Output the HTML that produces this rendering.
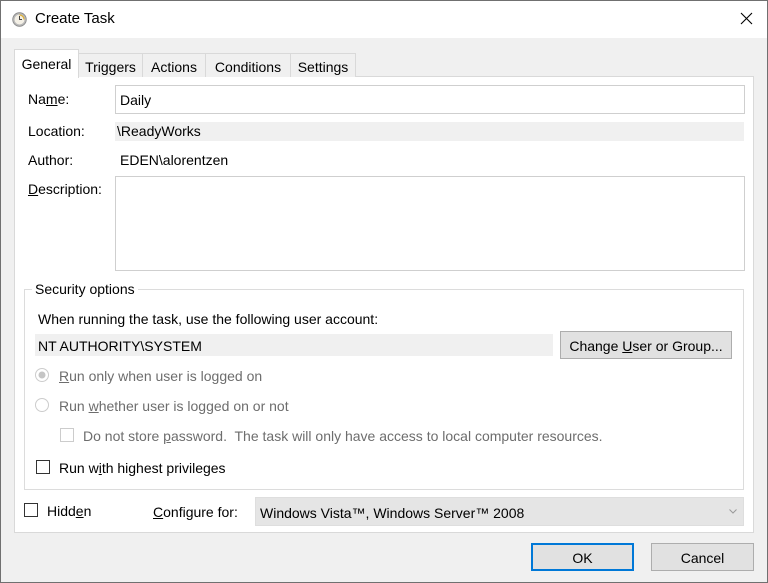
<!DOCTYPE html>
<html><head><style>
*{margin:0;padding:0;box-sizing:border-box}
body{width:768px;height:583px;background:#f0f0f0;font-family:"Liberation Sans",sans-serif;font-size:14px;color:#000;position:relative;overflow:hidden}
.a{position:absolute;white-space:nowrap}
.t{line-height:18px}
.g{color:#6d6d6d}
u{text-decoration:underline}
</style></head><body>
<div class="a" style="left:0;top:0;width:768px;height:583px;border:1px solid #707070"></div>
<div class="a" style="left:1px;top:1px;width:766px;height:37px;background:#fff"></div>
<svg class="a" style="left:12px;top:12px" width="15" height="15" viewBox="0 0 15 15"><circle cx="7.5" cy="7.5" r="6.8" fill="#b8b8b8" stroke="#888" stroke-width="0.8"/><circle cx="7.5" cy="7.5" r="5" fill="#f4f0e6"/><path d="M7.5 4v3.5h2.5" stroke="#444" stroke-width="1" fill="none"/><path d="M7.5 3A4.5 4.5 0 0 1 12 7.5" stroke="#e0b030" stroke-width="1.2" fill="none"/></svg>
<div class="a t" style="left:35px;top:10px;font-size:15px">Create Task</div>
<svg class="a" style="left:740px;top:12px" width="13" height="13"><path d="M1 1L12 12M12 1L1 12" stroke="#000" stroke-width="1.1"/></svg>

<div class="a" style="left:14px;top:76px;width:740px;height:457px;background:#fff;border:1px solid #d9d9d9"></div>
<div class="a t" style="left:78px;top:53px;width:65px;height:24px;border:1px solid #d9d9d9;border-bottom:none;background:#f0f0f0;text-align:center;padding-top:4px">Triggers</div>
<div class="a t" style="left:142px;top:53px;width:64px;height:24px;border:1px solid #d9d9d9;border-bottom:none;background:#f0f0f0;text-align:center;padding-top:4px">Actions</div>
<div class="a t" style="left:205px;top:53px;width:86px;height:24px;border:1px solid #d9d9d9;border-bottom:none;background:#f0f0f0;text-align:center;padding-top:4px">Conditions</div>
<div class="a t" style="left:290px;top:53px;width:66px;height:24px;border:1px solid #d9d9d9;border-bottom:none;background:#f0f0f0;text-align:center;padding-top:4px">Settings</div>
<div class="a t" style="left:14px;top:49px;width:65px;height:29px;border:1px solid #d9d9d9;border-bottom:none;background:#fff;text-align:center;padding-top:5px">General</div>

<div class="a t" style="left:28px;top:90px">Na<u>m</u>e:</div>
<div class="a t" style="left:115px;top:85px;width:630px;height:29px;border:1px solid #cfcfcf;padding:5px 4px">Daily</div>
<div class="a t" style="left:28px;top:122px">Location:</div>
<div class="a t" style="left:115px;top:122px;width:629px;height:19px;background:#f0f0f0;padding-left:2px">\ReadyWorks</div>
<div class="a t" style="left:28px;top:151px">Author:</div>
<div class="a t" style="left:120px;top:151px">EDEN\alorentzen</div>
<div class="a t" style="left:28px;top:180px"><u>D</u>escription:</div>
<div class="a" style="left:115px;top:176px;width:630px;height:95px;border:1px solid #cfcfcf"></div>

<div class="a" style="left:24px;top:289px;width:720px;height:201px;border:1px solid #dcdcdc"></div>
<div class="a t" style="left:32px;top:280px;background:#fff;padding:0 3px">Security options</div>
<div class="a t" style="left:38px;top:310px">When running the task, use the following user account:</div>
<div class="a t" style="left:35px;top:334px;width:518px;height:22px;background:#f0f0f0;padding:3px 3px">NT AUTHORITY\SYSTEM</div>
<div class="a t" style="left:560px;top:331px;width:172px;height:28px;background:#e1e1e1;border:1px solid #adadad;text-align:center;padding-top:5px">Change <u>U</u>ser or Group...</div>
<svg class="a" style="left:34px;top:367px" width="16" height="16"><circle cx="8" cy="8" r="6.5" fill="#fff" stroke="#ccc"/><circle cx="8" cy="8" r="3.5" fill="#c5c5c5"/></svg>
<div class="a t g" style="left:59px;top:367px"><u>R</u>un only when user is logged on</div>
<svg class="a" style="left:34px;top:397px" width="16" height="16"><circle cx="8" cy="8" r="6.5" fill="#fff" stroke="#ccc"/></svg>
<div class="a t g" style="left:59px;top:397px">Run <u>w</u>hether user is logged on or not</div>
<div class="a" style="left:60px;top:428px;width:14px;height:14px;border:1px solid #ccc"></div>
<div class="a t g" style="left:83px;top:427px">Do not store <u>p</u>assword.&nbsp; The task will only have access to local computer resources.</div>
<div class="a" style="left:36px;top:460px;width:14px;height:14px;border:1px solid #333"></div>
<div class="a t" style="left:59px;top:459px">Run w<u>i</u>th highest privileges</div>

<div class="a" style="left:24px;top:503px;width:14px;height:14px;border:1px solid #333"></div>
<div class="a t" style="left:47px;top:502px">Hidd<u>e</u>n</div>
<div class="a t" style="left:153px;top:503px"><u>C</u>onfigure for:</div>
<div class="a t" style="left:255px;top:497px;width:489px;height:29px;background:#e5e5e5;border:1px solid #dedede;padding:6px 4px">Windows Vista™, Windows Server™ 2008</div>
<svg class="a" style="left:729px;top:509px" width="8" height="5"><path d="M0.5 0.5L4 4L7.5 0.5" stroke="#999" fill="none"/></svg>

<div class="a t" style="left:531px;top:543px;width:103px;height:28px;background:#e1e1e1;border:2px solid #0078d7;text-align:center;padding-top:4px">OK</div>
<div class="a t" style="left:651px;top:543px;width:103px;height:28px;background:#e1e1e1;border:1px solid #adadad;text-align:center;padding-top:5px">Cancel</div>
</body></html>
